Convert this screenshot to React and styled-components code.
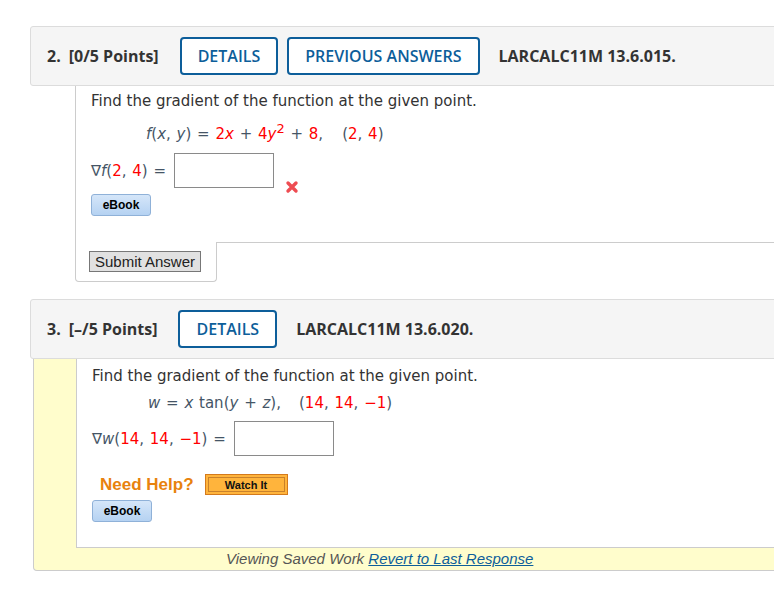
import styled, { createGlobalStyle } from 'styled-components'

const GlobalStyle = createGlobalStyle`
  body {
    margin: 0;
    background: #fff;
    overflow: hidden;
  }
`

const Page = styled.div`
  width: 770px;
  margin-left: 30px;
  padding-top: 26px;
`

const Question = styled.section`
  margin-bottom: 17px;
`

const Header = styled.div`
  display: flex;
  align-items: center;
  height: 58px;
  padding-left: 16px;
  background: #f5f5f5;
  border: 1px solid #dcdcdc;
  border-radius: 3px;
  font-family: 'Open Sans', sans-serif;
  color: #333;
`

const Num = styled.span`
  font-size: 16px;
  font-weight: 700;
  margin-right: 8px;
`

const Points = styled.span`
  font-size: 16px;
  font-weight: 700;
  margin-right: 21px;
`

const HeaderButton = styled.button`
  height: 38px;
  padding: 0 16px;
  margin-right: 9px;
  background: #fff;
  border: 2px solid #0d5e9a;
  border-radius: 4px;
  color: #0d5e9a;
  font-family: 'Open Sans', sans-serif;
  font-size: 16px;
  font-weight: 600;
`

const Code = styled.span`
  font-size: 16px;
  font-weight: 700;
  margin-left: 10px;
`

const Body = styled.div`
  margin-left: 45px;
  padding: 6px 0 0 15px;
  height: 150px;
  border-left: 1px solid #ccc;
  font-family: 'DejaVu Sans', Verdana, sans-serif;
  font-size: 15px;
  color: #333;
`

const Prompt = styled.p`
  margin: 0;
  line-height: 18px;
`

const Formula = styled.div`
  margin: ${(p) => p.gap}px 0 0 ${(p) => p.indent}px;
  line-height: 18px;
  color: #455566;
  word-spacing: 1px;
`

const Point = styled.span`
  margin-left: ${(p) => p.space}px;
`

const Red = styled.span`
  color: #f00;
`

const Var = styled.i``

const Sup = styled.sup`
  font-size: 13px;
`

const AnswerRow = styled.div`
  display: flex;
  align-items: flex-end;
  margin-top: ${(p) => p.gap}px;
  color: #455566;
`

const Label = styled.span`
  line-height: 18px;
  margin: 0 8px 8px 0;
  word-spacing: 1px;
`

const AnswerInput = styled.input`
  width: 100px;
  height: 35px;
  box-sizing: border-box;
  border: 1px solid #8a8a8a;
  background: #fff;
`

const WrongMark = styled.svg`
  margin: 0 0 -6px 11px;
`

const EBook = styled.button`
  display: block;
  width: 60px;
  height: 22px;
  margin-top: ${(p) => p.gap}px;
  padding: 0;
  background: linear-gradient(#d5e6f9, #b5d2f2);
  border: 1px solid #8fb1d8;
  border-radius: 3px;
  font-family: 'Liberation Sans', Arial, sans-serif;
  font-size: 12px;
  font-weight: 700;
  color: #000;
`

const Footer = styled.div`
  display: flex;
`

const SubmitTab = styled.div`
  width: 142px;
  height: 40px;
  margin-left: 45px;
  padding: 9px 0 0 13px;
  box-sizing: border-box;
  border: 1px solid #ccc;
  border-top: none;
  border-radius: 0 0 4px 4px;
`

const Filler = styled.div`
  flex: 1;
  border-top: 1px solid #ccc;
`

const SubmitButton = styled.button`
  height: 21px;
  padding: 0 5px;
  background: #e1e1e1;
  border: 1px solid #777;
  font-family: 'Liberation Sans', Arial, sans-serif;
  font-size: 15px;
  color: #222;
`

const YellowWrap = styled.div`
  margin-left: 3px;
  background: #fffdcc;
  border: 1px solid #ccc;
  border-top: none;
  border-radius: 0 0 0 4px;
`

const Panel = styled.div`
  margin-left: 42px;
  padding: 8px 0 0 15px;
  height: 180px;
  background: #fff;
  border-left: 1px solid #ccc;
  border-bottom: 1px solid #ccc;
  font-family: 'DejaVu Sans', Verdana, sans-serif;
  font-size: 15px;
  color: #333;
`

const HelpRow = styled.div`
  display: flex;
  align-items: center;
  margin: 18px 0 0 8px;
`

const NeedHelp = styled.span`
  font-family: 'Liberation Sans', Arial, sans-serif;
  font-size: 17px;
  font-weight: 700;
  color: #e8820e;
  margin-right: 11px;
`

const WatchIt = styled.button`
  width: 83px;
  height: 21px;
  padding: 0;
  background: #ffb43c;
  border: 1px solid #d47a1c;
  box-shadow: inset 0 0 0 2px #ffb43c, inset 0 0 0 3px #c9812b;
  font-family: 'Liberation Sans', Arial, sans-serif;
  font-size: 11px;
  font-weight: 700;
  color: #111;
`

const SavedNote = styled.div`
  height: 22px;
  line-height: 22px;
  padding-left: 192px;
  font-family: 'Liberation Sans', Arial, sans-serif;
  font-size: 15px;
  font-style: italic;
  color: #555;
`

const Link = styled.a`
  color: #0d5e9a;
  text-decoration: underline;
`

export default function App() {
  return (
    <Page>
      <GlobalStyle />
      <Question>
        <Header>
          <Num>2.</Num>
          <Points>[0/5 Points]</Points>
          <HeaderButton>DETAILS</HeaderButton>
          <HeaderButton>PREVIOUS ANSWERS</HeaderButton>
          <Code>LARCALC11M 13.6.015.</Code>
        </Header>
        <Body>
          <Prompt>Find the gradient of the function at the given point.</Prompt>
          <Formula indent={55} gap={10}>
            <Var>f</Var>(<Var>x</Var>, <Var>y</Var>) = <Red>2<Var>x</Var></Red> + <Red>4<Var>y</Var><Sup>2</Sup></Red> + <Red>8</Red>,
            <Point space={19}>
              (<Red>2</Red>, <Red>4</Red>)
            </Point>
          </Formula>
          <AnswerRow gap={10}>
            <Label>
              ∇<Var>f</Var>(<Red>2</Red>, <Red>4</Red>) =
            </Label>
            <AnswerInput />
            <WrongMark width="14" height="14" viewBox="0 0 14 14">
              <path d="M3 3 L11 11 M11 3 L3 11" stroke="#ee4c52" strokeWidth="3.4" strokeLinecap="round" />
            </WrongMark>
          </AnswerRow>
          <EBook gap={6}>eBook</EBook>
        </Body>
        <Footer>
          <SubmitTab>
            <SubmitButton>Submit Answer</SubmitButton>
          </SubmitTab>
          <Filler />
        </Footer>
      </Question>

      <Question>
        <Header>
          <Num>3.</Num>
          <Points>[–/5 Points]</Points>
          <HeaderButton>DETAILS</HeaderButton>
          <Code>LARCALC11M 13.6.020.</Code>
        </Header>
        <YellowWrap>
          <Panel>
            <Prompt>Find the gradient of the function at the given point.</Prompt>
            <Formula indent={56} gap={9}>
              <Var>w</Var> = <Var>x</Var> tan(<Var>y</Var> + <Var>z</Var>),
              <Point space={18}>
                (<Red>14</Red>, <Red>14</Red>, <Red>−1</Red>)
              </Point>
            </Formula>
            <AnswerRow gap={9}>
              <Label>
                ∇<Var>w</Var>(<Red>14</Red>, <Red>14</Red>, <Red>−1</Red>) =
              </Label>
              <AnswerInput />
            </AnswerRow>
            <HelpRow>
              <NeedHelp>Need Help?</NeedHelp>
              <WatchIt>Watch It</WatchIt>
            </HelpRow>
            <EBook gap={5}>eBook</EBook>
          </Panel>
          <SavedNote>
            Viewing Saved Work <Link href="#">Revert to Last Response</Link>
          </SavedNote>
        </YellowWrap>
      </Question>
    </Page>
  )
}
